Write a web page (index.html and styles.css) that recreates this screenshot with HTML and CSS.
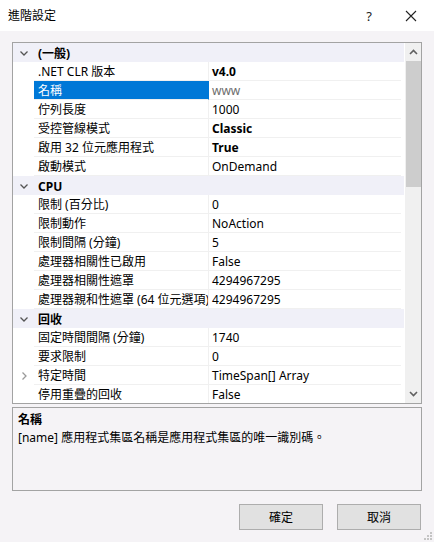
FILE: index.html
```html
<!DOCTYPE html>
<html lang="zh-Hant">
<head>
<meta charset="utf-8">
<title>進階設定</title>
<link rel="stylesheet" href="styles.css">
</head>
<body>
<div class="window">
  <div class="titlebar">
    <span class="title">進階設定</span>
    <span class="help">?</span>
    <svg class="close" width="12" height="12" viewBox="0 0 12 12"><path d="M1 1L11 11M11 1L1 11" stroke="#222" stroke-width="1.1" fill="none"/></svg>
  </div>
  <div class="content">
    <div class="grid">
      <div class="rows">
        <div class="cat"><span class="exp"><svg width="10" height="10" viewBox="0 0 10 10"><path d="M1.5 3.5L5 7L8.5 3.5" stroke="#555" stroke-width="1.3" fill="none"/></svg></span><span class="cat-name">(一般)</span></div>
        <div class="row"><span class="m"></span><span class="n">.NET CLR 版本</span><span class="v b">v4.0</span></div>
        <div class="row sel"><span class="m"></span><span class="n">名稱</span><span class="v dim">www</span></div>
        <div class="row"><span class="m"></span><span class="n">佇列長度</span><span class="v">1000</span></div>
        <div class="row"><span class="m"></span><span class="n">受控管線模式</span><span class="v b">Classic</span></div>
        <div class="row"><span class="m"></span><span class="n">啟用 32 位元應用程式</span><span class="v b">True</span></div>
        <div class="row"><span class="m"></span><span class="n">啟動模式</span><span class="v">OnDemand</span></div>
        <div class="cat"><span class="exp"><svg width="10" height="10" viewBox="0 0 10 10"><path d="M1.5 3.5L5 7L8.5 3.5" stroke="#555" stroke-width="1.3" fill="none"/></svg></span><span class="cat-name">CPU</span></div>
        <div class="row"><span class="m"></span><span class="n">限制 (百分比)</span><span class="v">0</span></div>
        <div class="row"><span class="m"></span><span class="n">限制動作</span><span class="v">NoAction</span></div>
        <div class="row"><span class="m"></span><span class="n">限制間隔 (分鐘)</span><span class="v">5</span></div>
        <div class="row"><span class="m"></span><span class="n">處理器相關性已啟用</span><span class="v">False</span></div>
        <div class="row"><span class="m"></span><span class="n">處理器相關性遮罩</span><span class="v">4294967295</span></div>
        <div class="row"><span class="m"></span><span class="n">處理器親和性遮罩 (64 位元選項)</span><span class="v">4294967295</span></div>
        <div class="cat"><span class="exp"><svg width="10" height="10" viewBox="0 0 10 10"><path d="M1.5 3.5L5 7L8.5 3.5" stroke="#555" stroke-width="1.3" fill="none"/></svg></span><span class="cat-name">回收</span></div>
        <div class="row"><span class="m"></span><span class="n">固定時間間隔 (分鐘)</span><span class="v">1740</span></div>
        <div class="row"><span class="m"></span><span class="n">要求限制</span><span class="v">0</span></div>
        <div class="row"><span class="m"><svg width="10" height="10" viewBox="0 0 10 10"><path d="M3.5 1.5L7 5L3.5 8.5" stroke="#9a9a9a" stroke-width="1.3" fill="none"/></svg></span><span class="n">特定時間</span><span class="v">TimeSpan[] Array</span></div>
        <div class="row"><span class="m"></span><span class="n">停用重疊的回收</span><span class="v">False</span></div>
      </div>
      <div class="scrollbar">
        <div class="arrow"><svg width="9" height="6" viewBox="0 0 9 6"><path d="M1 5L4.5 1.5L8 5" stroke="#606060" stroke-width="1.6" fill="none"/></svg></div>
        <div class="track"><div class="thumb"></div></div>
        <div class="arrow"><svg width="9" height="6" viewBox="0 0 9 6"><path d="M1 1L4.5 4.5L8 1" stroke="#606060" stroke-width="1.6" fill="none"/></svg></div>
      </div>
    </div>
    <div class="desc">
      <div class="desc-title">名稱</div>
      <div class="desc-text">[name] 應用程式集區名稱是應用程式集區的唯一識別碼。</div>
    </div>
    <div class="buttons">
      <button class="btn">確定</button>
      <button class="btn">取消</button>
    </div>
    <div class="grip">
      <span></span>
    </div>
  </div>
</div>
</body>
</html>
```

FILE: styles.css
```css
html, body {
  margin: 0;
  padding: 0;
  width: 434px;
  height: 542px;
  overflow: hidden;
  background: #f5f3f6;
  font-family: "Noto Sans", "Noto Sans CJK TC", sans-serif;
  font-size: 12px;
  color: #000;
}

.window {
  width: 434px;
  height: 542px;
  display: flex;
  flex-direction: column;
}

.titlebar {
  height: 31px;
  background: #ffffff;
  display: flex;
  align-items: center;
  padding-left: 8px;
  flex: none;
}

.title {
  font-size: 12px;
  flex: 1;
  line-height: 31px;
}

.help {
  font-size: 13px;
  margin-right: 33px;
  color: #222;
}

.close {
  margin-right: 17px;
}

.content {
  flex: 1;
  display: flex;
  flex-direction: column;
  padding: 11px 12px 0 12px;
  position: relative;
}

.grid {
  height: 360px;
  border: 1px solid #a3a3a3;
  background: #ffffff;
  display: flex;
  overflow: hidden;
}

.rows {
  width: 391px;
  flex: none;
  display: flex;
  flex-direction: column;
}

.cat {
  height: 19px;
  flex: none;
  background: #f0f0f8;
  display: grid;
  grid-template-columns: 21px 1fr;
  font-weight: bold;
}

.exp, .m {
  display: flex;
  align-items: center;
  justify-content: center;
  height: 19px;
}

.cat-name {
  padding-left: 4px;
  padding-top: 2px;
  line-height: 17px;
  height: 19px;
  box-sizing: border-box;
}

.row {
  height: 19px;
  flex: none;
  display: grid;
  grid-template-columns: 21px 175px 1fr;
}

.n, .v {
  box-sizing: border-box;
  height: 19px;
  padding-top: 2px;
  line-height: 16px;
  border-bottom: 1px solid #f0f0f0;
  white-space: nowrap;
  overflow: hidden;
}

.n {
  padding-left: 4px;
  border-right: 1px solid #f0f0f0;
}

.v {
  padding-left: 3px;
  margin-right: 3px;
}

.b {
  font-weight: bold;
}

.dim {
  color: #6d6d6d;
}

.sel .n {
  background: #0078d7;
  color: #ffffff;
  border-right-color: #0078d7;
}

.scrollbar {
  width: 17px;
  margin-left: 1px;
  flex: none;
  background: #f0f0f0;
  display: flex;
  flex-direction: column;
}

.arrow {
  height: 18px;
  flex: none;
  display: flex;
  align-items: center;
  justify-content: center;
}

.track {
  flex: 1;
  padding: 0 1px;
}

.thumb {
  height: 126px;
  background: #cdcdcd;
}

.desc {
  margin-top: 3px;
  height: 84px;
  box-sizing: border-box;
  border: 1px solid #a3a3a3;
  padding: 3px 5px 0 5px;
  flex: none;
}

.desc-title {
  font-weight: bold;
  line-height: 18px;
}

.desc-text {
  line-height: 18px;
}

.buttons {
  display: flex;
  justify-content: flex-end;
  gap: 14px;
  margin-top: 13px;
  padding-right: 1px;
}

.btn {
  width: 84px;
  height: 26px;
  background: #e1e1e1;
  border: 1px solid #adadad;
  font-family: "Noto Sans", "Noto Sans CJK TC", sans-serif;
  font-size: 12px;
  color: #000;
  padding: 0;
}

.grip {
  position: absolute;
  right: 2px;
  bottom: 2px;
  width: 10px;
  height: 10px;
}

.grip span {
  position: absolute;
  right: 0;
  bottom: 0;
  width: 2px;
  height: 2px;
  background: #c4c4c4;
  box-shadow: -3px 0 0 #c4c4c4, -6px 0 0 #c4c4c4, 0 -3px 0 #c4c4c4, 0 -6px 0 #c4c4c4, -3px -3px 0 #c4c4c4;
}
```
